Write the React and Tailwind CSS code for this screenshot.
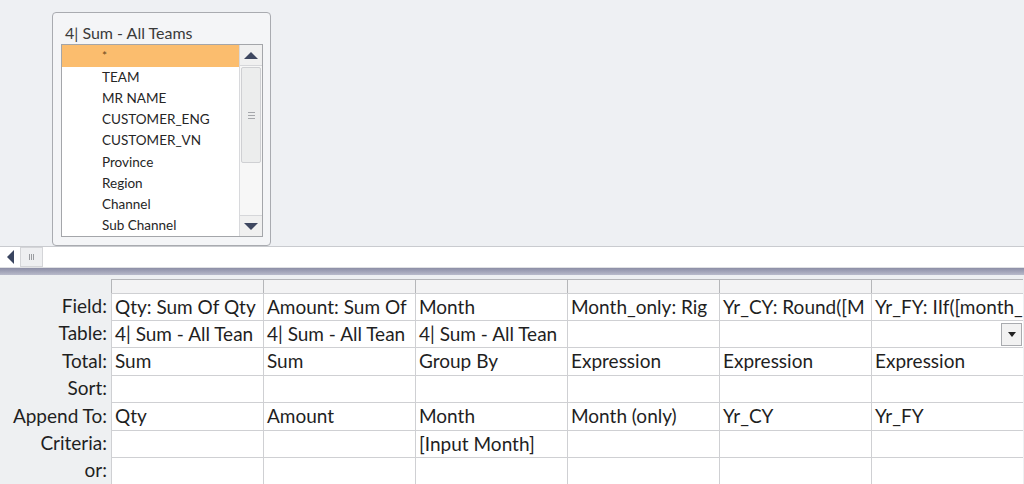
import { Fragment } from 'react';

const fields = ['*', 'TEAM', 'MR NAME', 'CUSTOMER_ENG', 'CUSTOMER_VN', 'Province', 'Region', 'Channel', 'Sub Channel'];

const labels = ['Field:', 'Table:', 'Total:', 'Sort:', 'Append To:', 'Criteria:', 'or:'];
const heights = ['h-[27px]', 'h-[27px]', 'h-[28px]', 'h-[27px]', 'h-[28px]', 'h-[27px]', 'h-[27px]'];

// text as it shows in the narrow grid cells
const columns = [
  ['Qty: Sum Of Qty', '4| Sum - All Tean', 'Sum', '', 'Qty', '', ''],
  ['Amount: Sum Of', '4| Sum - All Tean', 'Sum', '', 'Amount', '', ''],
  ['Month', '4| Sum - All Tean', 'Group By', '', 'Month', '[Input Month]', ''],
  ['Month_only: Rig', '', 'Expression', '', 'Month (only)', '', ''],
  ['Yr_CY: Round([M', '', 'Expression', '', 'Yr_CY', '', ''],
  ['Yr_FY: IIf([month_', '', 'Expression', '', 'Yr_FY', '', ''],
];

function FieldList() {
  return (
    <div className="w-[219px] h-[234px] rounded-[4px] border border-[#a9abb0] bg-[#f4f5f7] pt-[10px]">
      <div className="pl-[12px] text-[16px] leading-[20px] text-[#3a3a3a]">4| Sum - All Teams</div>
      <div className="ml-[8px] mt-[1px] w-[202px] h-[193px] border border-[#a4a6aa] bg-white flex">
        <div className="flex-1 overflow-hidden">
          {fields.map((f, i) => (
            <div
              key={f}
              className={`pl-[40px] text-[13.5px] text-[#262626] ${i === 0 ? 'h-[22px] leading-[21px] bg-[#fbbd6e]' : 'h-[21.15px] leading-[21.15px]'}`}
            >
              {f === '*' ? <span className="text-[12px] text-[#6b4a20]">*</span> : f}
            </div>
          ))}
        </div>
        <div className="w-[23px] flex flex-col bg-[#f7f7f7] border-l border-[#d8d9dc]">
          <div className="h-[21px] flex items-center justify-center border-b border-[#d6d7da] bg-[#f0f0f0]">
            <div className="w-0 h-0 border-l-[7px] border-r-[7px] border-b-[7px] border-l-transparent border-r-transparent border-b-[#3e4760]" />
          </div>
          <div className="mt-[1px] mx-[1px] h-[96px] bg-[#eceded] border border-[#cfd0d3] rounded-[2px] flex items-center justify-center">
            <div className="flex flex-col gap-[2px]">
              <div className="w-[7px] h-px bg-[#a5a7ab]" />
              <div className="w-[7px] h-px bg-[#a5a7ab]" />
              <div className="w-[7px] h-px bg-[#a5a7ab]" />
            </div>
          </div>
          <div className="flex-1" />
          <div className="h-[21px] flex items-center justify-center border-t border-[#d6d7da] bg-[#f0f0f0]">
            <div className="w-0 h-0 border-l-[7px] border-r-[7px] border-t-[7px] border-l-transparent border-r-transparent border-t-[#3e4760]" />
          </div>
        </div>
      </div>
    </div>
  );
}

export default function App() {
  return (
    <div className="w-[1024px] h-[484px] overflow-hidden flex flex-col bg-[#eef0f2]" style={{ fontFamily: 'Lato, "Liberation Sans", sans-serif' }}>
      <div className="h-[247px] pl-[52px] pt-[12px] bg-[#eef0f3] border-b border-[#c9cbcf]">
        <FieldList />
      </div>
      <div className="h-[21px] bg-white flex items-center border-b border-[#e0e1e4]">
        <div className="w-[20px] h-full flex items-center justify-center">
          <div className="w-0 h-0 border-t-[7px] border-b-[7px] border-r-[7px] border-t-transparent border-b-transparent border-r-[#3a4560]" />
        </div>
        <div className="w-[23px] h-[20px] bg-[#eeeff1] border border-[#d4d5d8] flex items-center justify-center gap-[1px]">
          <div className="w-px h-[6px] bg-[#9a9ca0]" />
          <div className="w-px h-[6px] bg-[#9a9ca0]" />
          <div className="w-px h-[6px] bg-[#9a9ca0]" />
        </div>
      </div>
      <div className="h-[8px] bg-gradient-to-b from-[#8c8ea6] to-[#b9bbcb]" />
      <div className="flex-1 pt-[4px]">
        <div className="grid grid-cols-[111px_repeat(6,152px)] text-[19px] text-[#1f1f1f]">
          <div className="h-[14px]" />
          {columns.map((_, c) => (
            <div key={c} className="h-[14px] bg-[#f3f3f4] border-l border-t border-[#b5b6b9]" />
          ))}
          {labels.map((label, r) => (
            <Fragment key={label}>
              <div className={`${heights[r]} flex items-center justify-end pr-[4px]`}>{label}</div>
              {columns.map((col, c) => (
                <div
                  key={c}
                  className={`${heights[r]} relative bg-white border-l border-t border-[#cfd0d3] flex items-center pl-[3px] overflow-hidden whitespace-nowrap`}
                >
                  {col[r]}
                  {r === 1 && c === 5 && (
                    <div className="absolute right-[1px] top-[2px] w-[21px] h-[23px] bg-[#f2f2f2] border border-[#a9abaf] flex items-center justify-center">
                      <div className="w-0 h-0 border-l-[4px] border-r-[4px] border-t-[5px] border-l-transparent border-r-transparent border-t-[#222]" />
                    </div>
                  )}
                </div>
              ))}
            </Fragment>
          ))}
        </div>
      </div>
    </div>
  );
}
